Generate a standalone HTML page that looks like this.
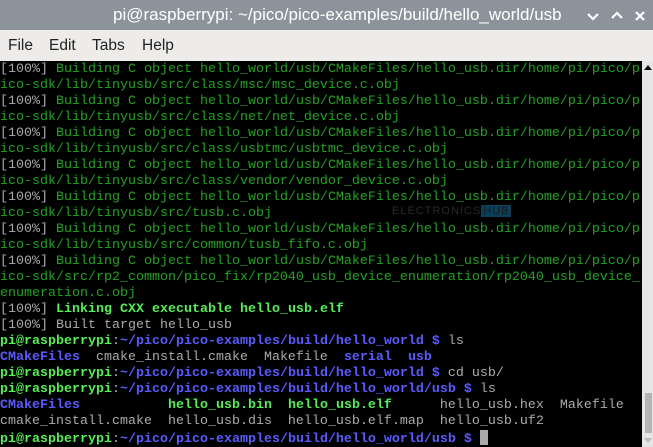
<!DOCTYPE html>
<html><head><meta charset="utf-8"><style>
*{margin:0;padding:0;box-sizing:border-box}
body{width:653px;height:447px;overflow:hidden;background:#000;font-family:"Liberation Sans",sans-serif;position:relative}
#title{position:absolute;left:0;top:0;width:653px;height:30px;background:#8c939a;color:#fff;font-size:17px;line-height:30px}
#title .t{position:absolute;left:113px;top:0;white-space:nowrap}
#menu{position:absolute;left:0;top:30px;width:653px;height:31px;background:#edecea;font-size:15.5px;color:#222;line-height:31px}
#menu span{position:absolute;top:0}
#term{position:absolute;left:0;top:61px;width:642px;height:386px;background:#000;font-family:"Liberation Mono",monospace;font-size:13.33px;line-height:16px;padding-top:1px;white-space:pre;color:#aaa;overflow:hidden}
.g{color:#1ea51e}.G{color:#55ee55;font-weight:bold}.B{color:#5a5aff;font-weight:bold}
#sb{position:absolute;left:642px;top:61px;width:11px;height:386px;background:#e6e6e6}
#thumb{position:absolute;left:645px;top:393px;width:7px;height:40px;background:#b4b4b4}
.cur{display:inline-block;width:8px;height:15px;background:#aaa;vertical-align:-3px}
#wm{position:absolute;left:392px;top:205px;font-family:"Liberation Sans",sans-serif;font-size:11px;color:#2a2a2a;letter-spacing:1px}
#wm b{background:#0b3f58;color:#1a1a1a;padding:0 2px;font-weight:normal}
</style></head><body>
<div id="title"><span class="t">pi@raspberrypi: ~/pico/pico-examples/build/hello_world/usb</span>
<svg style="position:absolute;left:585px;top:10px" width="64" height="12" viewBox="0 0 64 12" fill="none" stroke="#fff" stroke-width="2.2"><path d="M3 4l5 5 5-5"/><path d="M27 8l5-5 5 5"/><path d="M51 2l8 8M59 2l-8 8"/></svg></div>
<div id="menu"><span style="left:8px">File</span><span style="left:49px">Edit</span><span style="left:92px">Tabs</span><span style="left:142px">Help</span></div>
<div id="term">[100%] <span class="g">Building C object hello_world/usb/CMakeFiles/hello_usb.dir/home/pi/pico/p</span>
<span class="g">ico-sdk/lib/tinyusb/src/class/msc/msc_device.c.obj</span>
[100%] <span class="g">Building C object hello_world/usb/CMakeFiles/hello_usb.dir/home/pi/pico/p</span>
<span class="g">ico-sdk/lib/tinyusb/src/class/net/net_device.c.obj</span>
[100%] <span class="g">Building C object hello_world/usb/CMakeFiles/hello_usb.dir/home/pi/pico/p</span>
<span class="g">ico-sdk/lib/tinyusb/src/class/usbtmc/usbtmc_device.c.obj</span>
[100%] <span class="g">Building C object hello_world/usb/CMakeFiles/hello_usb.dir/home/pi/pico/p</span>
<span class="g">ico-sdk/lib/tinyusb/src/class/vendor/vendor_device.c.obj</span>
[100%] <span class="g">Building C object hello_world/usb/CMakeFiles/hello_usb.dir/home/pi/pico/p</span>
<span class="g">ico-sdk/lib/tinyusb/src/tusb.c.obj</span>
[100%] <span class="g">Building C object hello_world/usb/CMakeFiles/hello_usb.dir/home/pi/pico/p</span>
<span class="g">ico-sdk/lib/tinyusb/src/common/tusb_fifo.c.obj</span>
[100%] <span class="g">Building C object hello_world/usb/CMakeFiles/hello_usb.dir/home/pi/pico/p</span>
<span class="g">ico-sdk/src/rp2_common/pico_fix/rp2040_usb_device_enumeration/rp2040_usb_device_</span>
<span class="g">enumeration.c.obj</span>
[100%] <span class="G">Linking CXX executable hello_usb.elf</span>
[100%] Built target hello_usb
<span class="G">pi@raspberrypi</span>:<span class="B">~/pico/pico-examples/build/hello_world $</span> ls
<span class="B">CMakeFiles</span>  cmake_install.cmake  Makefile  <span class="B">serial</span>  <span class="B">usb</span>
<span class="G">pi@raspberrypi</span>:<span class="B">~/pico/pico-examples/build/hello_world $</span> cd usb/
<span class="G">pi@raspberrypi</span>:<span class="B">~/pico/pico-examples/build/hello_world/usb $</span> ls
<span class="B">CMakeFiles</span>           <span class="G">hello_usb.bin</span>  <span class="G">hello_usb.elf</span>      hello_usb.hex  Makefile
cmake_install.cmake  hello_usb.dis  hello_usb.elf.map  hello_usb.uf2
<span class="G">pi@raspberrypi</span>:<span class="B">~/pico/pico-examples/build/hello_world/usb $</span> <span class="cur"></span></div>
<div id="wm">ELECTRONICS<b>HUB</b></div>
<div id="sb"></div>
<svg style="position:absolute;left:643px;top:64px" width="10" height="8"><path d="M1 6L5 1 9 6Z" fill="#111"/></svg>
<div id="thumb"></div>
<svg style="position:absolute;left:643px;top:437px" width="10" height="8"><path d="M1 1L5 6 9 1Z" fill="#bbb"/></svg>
</body></html>
